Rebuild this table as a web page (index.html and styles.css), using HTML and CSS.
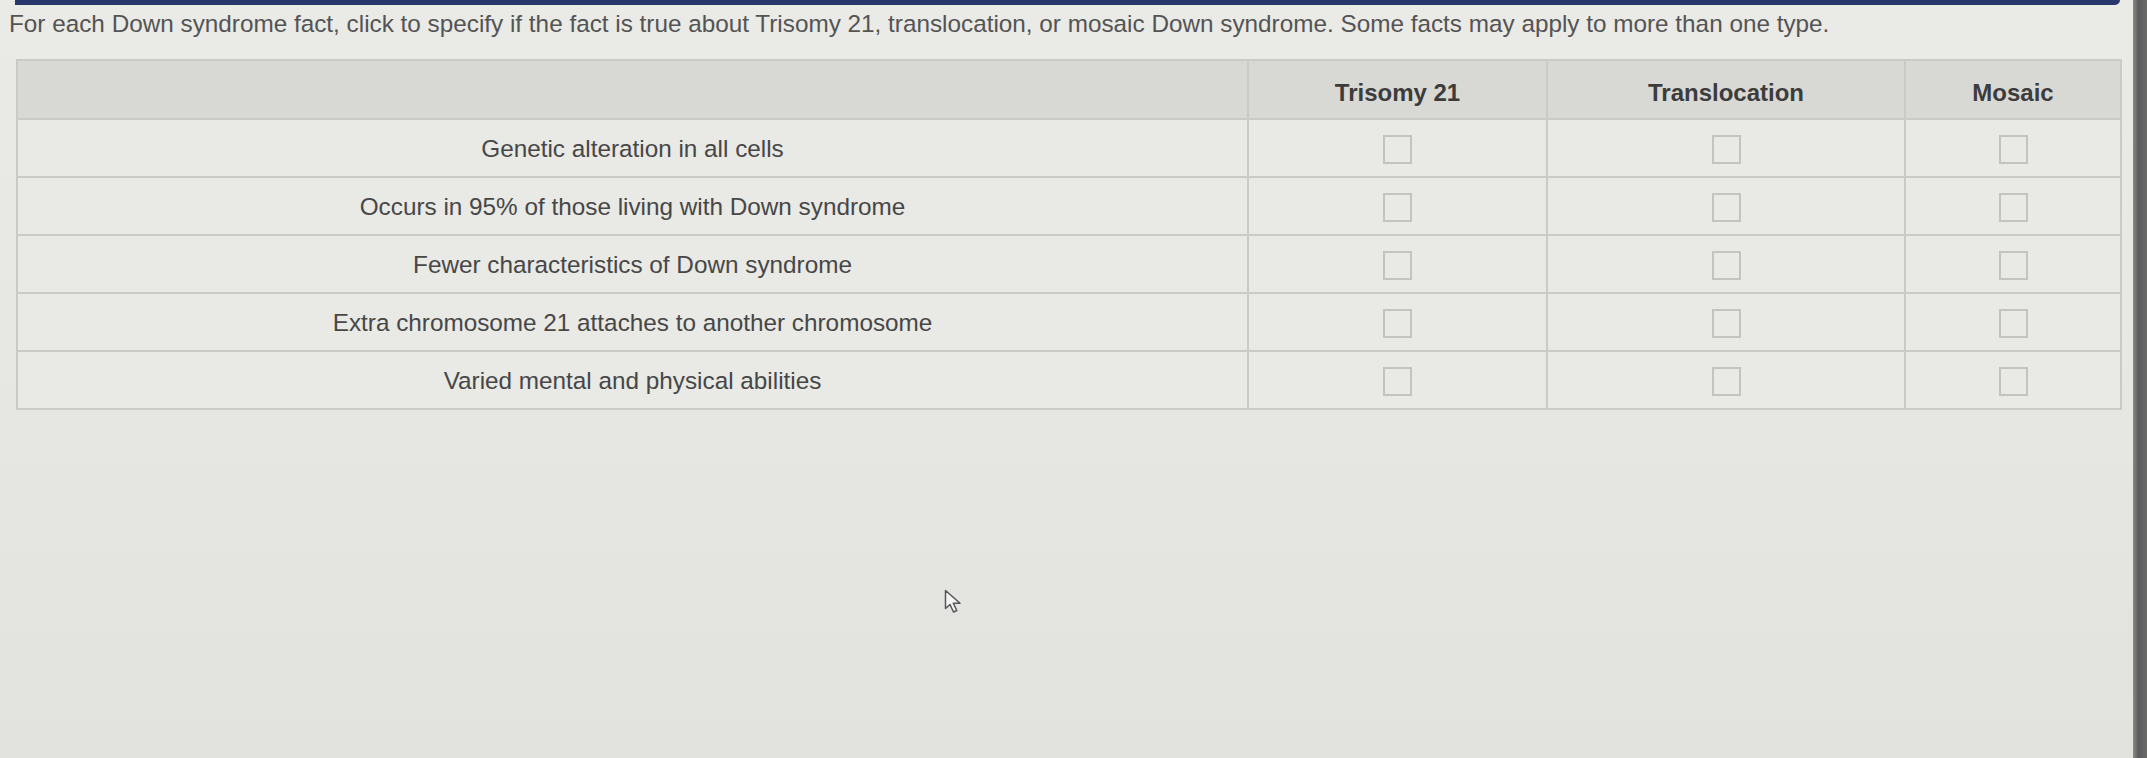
FILE: index.html
```html
<!DOCTYPE html>
<html lang="en">
<head>
<meta charset="utf-8">
<title>Down syndrome facts</title>
<link rel="stylesheet" href="styles.css">
</head>
<body>
<div class="frame">
  <main class="screen">
    <div class="topbar"></div>
    <p class="prompt">For each Down syndrome fact, click to specify if the fact is true about Trisomy 21, translocation, or mosaic Down syndrome. Some facts may apply to more than one type.</p>
    <table class="grid">
      <colgroup>
        <col class="c-fact">
        <col class="c-tri">
        <col class="c-trans">
        <col class="c-mos">
      </colgroup>
      <thead>
        <tr>
          <th></th>
          <th>Trisomy 21</th>
          <th>Translocation</th>
          <th>Mosaic</th>
        </tr>
      </thead>
      <tbody>
        <tr>
          <td class="fact">Genetic alteration in all cells</td>
          <td><span class="box"></span></td>
          <td><span class="box"></span></td>
          <td><span class="box"></span></td>
        </tr>
        <tr>
          <td class="fact">Occurs in 95% of those living with Down syndrome</td>
          <td><span class="box"></span></td>
          <td><span class="box"></span></td>
          <td><span class="box"></span></td>
        </tr>
        <tr>
          <td class="fact">Fewer characteristics of Down syndrome</td>
          <td><span class="box"></span></td>
          <td><span class="box"></span></td>
          <td><span class="box"></span></td>
        </tr>
        <tr>
          <td class="fact">Extra chromosome 21 attaches to another chromosome</td>
          <td><span class="box"></span></td>
          <td><span class="box"></span></td>
          <td><span class="box"></span></td>
        </tr>
        <tr>
          <td class="fact">Varied mental and physical abilities</td>
          <td><span class="box"></span></td>
          <td><span class="box"></span></td>
          <td><span class="box"></span></td>
        </tr>
      </tbody>
    </table>
    <svg class="cursor" width="20" height="26" viewBox="0 0 20 26" aria-hidden="true">
      <path d="M1.5 1.5 L1.5 19.5 L6 15.5 L9.5 23 L12.8 21.5 L9.3 14.2 L16 14.2 Z" fill="#f4f4f2" stroke="#55555a" stroke-width="1.5" stroke-linejoin="round"/>
    </svg>
  </main>
  <div class="bezel"></div>
</div>
</body>
</html>
```

FILE: styles.css
```css
html, body {
  margin: 0;
  padding: 0;
  height: 100%;
  background: #e4e4e0;
}

.frame {
  display: flex;
  width: 2147px;
  height: 758px;
  overflow: hidden;
}

.screen {
  position: relative;
  flex: 1;
  background: linear-gradient(180deg, #eaeae6 0%, #e7e7e3 45%, #e2e2de 100%);
  font-family: "Liberation Sans", Arial, sans-serif;
}

.bezel {
  width: 14px;
  background: linear-gradient(90deg, #8a8a88 0%, #5b5b5b 40%, #6c6c6a 100%);
}

.topbar {
  height: 5px;
  margin-left: 15px;
  width: 2105px;
  background: #28376c;
  border-bottom-right-radius: 5px;
}

.prompt {
  margin: 5px 0 0 0;
  padding-left: 9px;
  font-size: 24.3px;
  line-height: 28px;
  color: #545454;
  white-space: nowrap;
}

.grid {
  margin: 21px 0 0 16px;
  width: 2104px;
  border-collapse: collapse;
  table-layout: fixed;
  color: #474747;
}

.c-fact { width: 1231px; }
.c-tri { width: 299px; }
.c-trans { width: 358px; }
.c-mos { width: 216px; }

.grid th,
.grid td {
  border: 2px solid #cacac6;
  text-align: center;
  vertical-align: middle;
  padding: 0;
}

.grid th {
  height: 51px;
  padding-top: 6px;
  background: #d8d8d4;
  font-size: 24px;
  font-weight: bold;
  color: #3c3c3c;
}

.grid td {
  height: 54px;
  padding-top: 2px;
  background: #e9e9e5;
  font-size: 24.3px;
}

.box {
  display: inline-block;
  width: 25px;
  height: 25px;
  border: 2px solid #c3c3bf;
  vertical-align: middle;
}

.cursor {
  position: absolute;
  left: 944px;
  top: 589px;
}
```
